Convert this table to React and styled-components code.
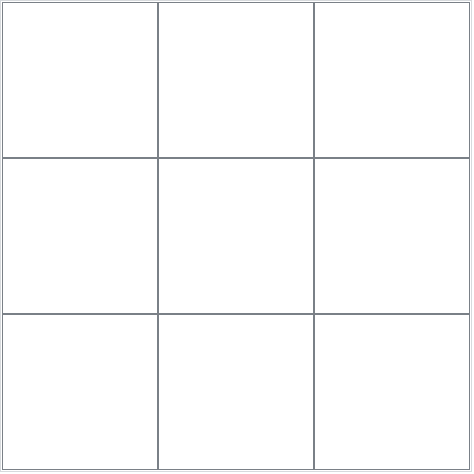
import React from "react";
import styled, { createGlobalStyle } from "styled-components";

const GlobalStyle = createGlobalStyle`
  body {
    margin: 0;
    background: #fff;
    font-family: "Liberation Sans", Arial, sans-serif;
  }
`;

const Board = styled.div`
  display: grid;
  grid-template-columns: repeat(3, 156px);
  grid-template-rows: repeat(3, 156px);
  padding: 1px;
  width: max-content;
  border: 1px solid #d7dadd;
`;

const Square = styled.button`
  border: 1px solid #7a8087;
  background: #fff;
  padding: 0;
  margin: 0;
  font-size: 64px;
  cursor: pointer;
`;

const App = () => {
  return (
    <>
      <GlobalStyle />
      <Board>
        {[0, 1, 2, 3, 4, 5, 6, 7, 8].map((i) => (
          <Square key={i}></Square>
        ))}
      </Board>
    </>
  );
};

export default App;
